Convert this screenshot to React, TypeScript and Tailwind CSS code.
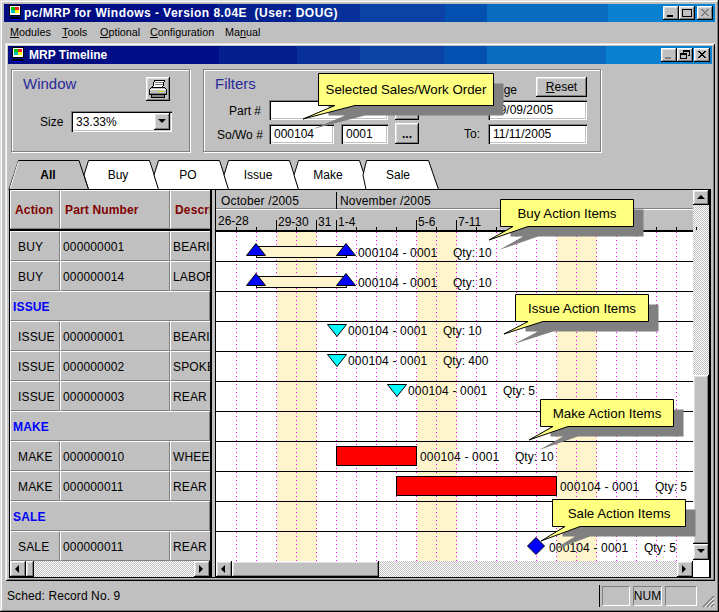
import type { ReactNode } from 'react';

const raised = 'bg-[#c0c0c0] shadow-[inset_-1px_-1px_0_#000,inset_1px_1px_0_#fff,inset_-2px_-2px_0_#808080,inset_2px_2px_0_#dfdfdf]';
const sunken = 'bg-white shadow-[inset_1px_1px_0_#808080,inset_2px_2px_0_#000,inset_-1px_-1px_0_#fff,inset_-2px_-2px_0_#c0c0c0]';
const groove = 'border border-[#808080] shadow-[1px_1px_0_#fff,inset_1px_1px_0_#fff]';
const dither = 'bg-[repeating-conic-gradient(#fff_0_25%,#c0c0c0_0_50%)] bg-[length:2px_2px]';
const titleBands =
  'bg-[linear-gradient(90deg,#000c80_0_13%,#000f88_13%_30%,#04208f_30%_41%,#08309a_41%_50%,#0a42a6_50%_62%,#0450b0_62%_68%,#0a6cc0_68%_85%,#0a80d0_85%_100%)]';

function AppIcon() {
  return (
    <svg width="12" height="16" viewBox="0 0 12 16" className="shrink-0" shapeRendering="crispEdges">
      <rect x="0" y="0" width="12" height="11" fill="#000" />
      <rect x="1" y="1" width="10" height="9" fill="#fff" />
      <rect x="2" y="2" width="4" height="3" fill="#00c000" />
      <rect x="6" y="2" width="4" height="3" fill="#ff2020" />
      <rect x="2" y="5" width="4" height="3" fill="#00c0c0" />
      <rect x="6" y="5" width="4" height="3" fill="#ffff00" />
      <rect x="1" y="12" width="10" height="2" fill="#000" />
      <rect x="2" y="14" width="8" height="1" fill="#0000ff" />
    </svg>
  );
}

function WinButton({ kind, disabled, className }: { kind: 'min' | 'max' | 'restore' | 'close'; disabled?: boolean; className?: string }) {
  const c = disabled ? '#808080' : '#000';
  return (
    <div className={`w-[16px] h-[14px] flex items-center justify-center ${raised} ${className ?? ''}`}>
      <svg width="12" height="10" viewBox="0 0 12 10" shapeRendering="crispEdges">
        {kind === 'min' && <rect x="2" y="7" width="6" height="2" fill={c} />}
        {kind === 'max' && <path d="M1.5 1.5H10.5V8.5H1.5Z M1 1.5H11" fill="none" stroke={c} />}
        {kind === 'restore' && (
          <>
            <path d="M4.5 2.5V0.5H10.5V5.5H8.5" fill="none" stroke={c} />
            <path d="M4 1H11" stroke={c} />
            <path d="M1.5 3.5H7.5V8.5H1.5Z" fill="none" stroke={c} />
            <path d="M1 4H8" stroke={c} />
          </>
        )}
        {kind === 'close' && <path d="M2 1L9 8M3 1L10 8M9 1L2 8M10 1L3 8" stroke={c} shapeRendering="auto" strokeWidth="1" />}
      </svg>
    </div>
  );
}

function PrinterIcon() {
  return (
    <svg width="20" height="18" viewBox="0 0 20 18" shapeRendering="crispEdges">
      <path d="M6.5 0.5H16.5L14.5 7.5H4.5Z" fill="#fff" stroke="#000" />
      <path d="M7 2.5H15M6.5 4.5H14.5" stroke="#808080" />
      <path d="M3.5 7.5H16.5L18.5 9.5V14.5H1.5V9.5Z" fill="#c0c0c0" stroke="#000" />
      <rect x="2" y="9" width="16" height="1" fill="#fff" />
      <rect x="10" y="11" width="5" height="1" fill="#e8e800" />
      <rect x="2" y="13" width="16" height="1" fill="#808080" />
      <rect x="3.5" y="14.5" width="13" height="3" fill="#808080" stroke="#000" />
    </svg>
  );
}

function Arrow({ dir }: { dir: 'up' | 'down' | 'left' | 'right' }) {
  const paths = {
    up: 'M4 1L8 5H0Z',
    down: 'M0 1H8L4 5Z',
    left: 'M5 0V8L1 4Z',
    right: 'M1 0V8L5 4Z',
  };
  return (
    <svg width="8" height="8" viewBox="0 0 8 8">
      <path d={paths[dir]} fill="#000" />
    </svg>
  );
}

function ScrollBtn({ dir, className }: { dir: 'up' | 'down' | 'left' | 'right'; className: string }) {
  return (
    <div className={`flex items-center justify-center shrink-0 ${raised} ${className}`}>
      <Arrow dir={dir} />
    </div>
  );
}

function Underlined({ pre, u, post }: { pre?: string; u: string; post?: string }) {
  return (
    <>
      {pre}
      <span className="underline">{u}</span>
      {post}
    </>
  );
}

function Panel({ className, children }: { className: string; children: ReactNode }) {
  return <div className={`h-[83px] shrink-0 relative ${groove} ${className}`}>{children}</div>;
}

function Field({ className, children }: { className: string; children?: ReactNode }) {
  return <div className={`h-[20px] flex items-center pl-[5px] text-[12px] text-black shrink-0 ${sunken} ${className}`}>{children}</div>;
}

const tabs = ['Buy', 'PO', 'Issue', 'Make', 'Sale'];

function Tabs() {
  return (
    <div className="flex h-[30px] mt-[8px] pl-[5px] text-[12px] text-black">
      {/* later tabs get drawn last so each notch sits over the previous tab */}
      <div className="relative w-[70px] flex items-center justify-center font-bold z-10">
        <svg width="70" height="30" className="absolute left-0 top-0 overflow-visible">
          <path d="M5.5 0.5H66L75.5 29.5H-4Z" fill="#c0c0c0" stroke="#000" />
          <path d="M5.5 1.5L-3 28.5" stroke="#fff" fill="none" />
        </svg>
        <span className="relative">All</span>
      </div>
      {tabs.map((t) => (
        <div key={t} className="relative w-[70px] flex items-center justify-center">
          <svg width="70" height="30" className="absolute left-0 top-0 overflow-visible">
            <path d={t === 'Sale' ? 'M3.5 0.5H65.5L75.5 29.5H3L0 15Z' : 'M5.5 0.5H66.5L76 29.5H5.5L1 15Z'} fill="#fff" stroke="#000" />
          </svg>
          <span className="relative">{t}</span>
        </div>
      ))}
    </div>
  );
}

type GridRow = { section: string } | { action: string; part: string; desc: string };

const gridRows: GridRow[] = [
  { action: 'BUY', part: '000000001', desc: 'BEARING' },
  { action: 'BUY', part: '000000014', desc: 'LABOR' },
  { section: 'ISSUE' },
  { action: 'ISSUE', part: '000000001', desc: 'BEARING' },
  { action: 'ISSUE', part: '000000002', desc: 'SPOKE' },
  { action: 'ISSUE', part: '000000003', desc: 'REAR AXLE' },
  { section: 'MAKE' },
  { action: 'MAKE', part: '000000010', desc: 'WHEEL' },
  { action: 'MAKE', part: '000000011', desc: 'REAR WHEEL' },
  { section: 'SALE' },
  { action: 'SALE', part: '000000011', desc: 'REAR WHEEL' },
];

const bevelCell = 'shrink-0 pt-[1px] border-t border-l border-t-white border-l-white border-b border-r border-b-[#808080] border-r-[#808080]';

function LeftGrid() {
  return (
    <div className="w-[203px] shrink-0 flex flex-col border-l border-r-2 border-black overflow-hidden text-[12px] text-black tracking-[0.15px]">
      <div className="h-[41px] flex shrink-0 border-b-2 border-black font-bold text-[#800000]">
        <div className={`w-[50px] flex items-center pl-[4px] ${bevelCell}`}>Action</div>
        <div className={`w-[110px] flex items-center pl-[4px] ${bevelCell}`}>Part Number</div>
        <div className={`w-[50px] flex items-center pl-[4px] whitespace-nowrap ${bevelCell}`}>Description</div>
      </div>
      {gridRows.map((r, i) =>
        'section' in r ? (
          <div key={i} className={`h-[30px] flex items-center pl-[2px] font-bold text-[#0000ff] ${bevelCell}`}>
            {r.section}
          </div>
        ) : (
          <div key={i} className="h-[30px] shrink-0 flex">
            <div className={`w-[50px] flex items-center pl-[7px] ${bevelCell}`}>{r.action}</div>
            <div className={`w-[110px] flex items-center pl-[2px] ${bevelCell}`}>{r.part}</div>
            <div className={`w-[50px] flex items-center pl-[2px] whitespace-nowrap ${bevelCell}`}>{r.desc}</div>
          </div>
        ),
      )}
      <div className="h-[16px] shrink-0 flex">
        <ScrollBtn dir="left" className="w-[16px] h-[16px]" />
        <div className={`w-[8px] h-[16px] shrink-0 ${raised}`} />
        <div className={`w-[160px] h-[16px] shrink-0 ${dither}`} />
        <ScrollBtn dir="right" className="w-[16px] h-[16px]" />
      </div>
    </div>
  );
}

const bandCols = [3, 4, 10, 11, 17, 18];
const cols = Array.from({ length: 24 }, (_, i) => i);

function Up({ x, y }: { x: number; y: number }) {
  return (
    <svg width="20" height="13" viewBox="0 0 20 13" className="absolute" style={{ left: x, top: y }}>
      <path d="M10 0.5L19.5 12.5H0.5Z" fill="#0000ff" stroke="#000" />
    </svg>
  );
}

function Down({ x }: { x: number }) {
  return (
    <svg width="20" height="13" viewBox="0 0 20 13" className="absolute top-[2px]" style={{ left: x }}>
      <path d="M0.5 0.5H19.5L10 12.5Z" fill="#00ffff" stroke="#000" />
    </svg>
  );
}

function RowText({ x, q, top, qty }: { x: number; q: number; top: number; qty: string }) {
  return (
    <>
      <span className="absolute whitespace-nowrap leading-[14px] tracking-[0.15px]" style={{ left: x, top }}>
        000104 - 0001
      </span>
      <span className="absolute whitespace-nowrap leading-[14px]" style={{ left: q, top }}>
        {qty}
      </span>
    </>
  );
}

function BuyBar() {
  return (
    <>
      <div className="absolute left-[40px] top-[14px] w-[91px] h-[12px] bg-[#fff5cc] border border-black" />
      <Up x={30} y={11} />
      <Up x={120} y={11} />
    </>
  );
}

const chartRows: ReactNode[] = [
  <>
    <BuyBar />
    <RowText x={142} q={237} top={14} qty="Qty: 10" />
  </>,
  <>
    <BuyBar />
    <RowText x={142} q={237} top={14} qty="Qty: 10" />
  </>,
  null,
  <>
    <Down x={111} />
    <RowText x={132} q={227} top={2} qty="Qty: 10" />
  </>,
  <>
    <Down x={111} />
    <RowText x={132} q={227} top={2} qty="Qty: 400" />
  </>,
  <>
    <Down x={171} />
    <RowText x={192} q={287} top={2} qty="Qty: 5" />
  </>,
  null,
  <>
    <div className="absolute left-[120px] top-[4px] w-[81px] h-[20px] bg-[#ff0000] border border-black" />
    <RowText x={204} q={299} top={8} qty="Qty: 10" />
  </>,
  <>
    <div className="absolute left-[180px] top-[4px] w-[161px] h-[20px] bg-[#ff0000] border border-black" />
    <RowText x={344} q={439} top={8} qty="Qty: 5" />
  </>,
  null,
  <>
    <svg width="18" height="18" viewBox="0 0 18 18" className="absolute left-[311px] top-[5px]">
      <path d="M9 0.5L17.5 9L9 17.5L0.5 9Z" fill="#0000ff" stroke="#000" />
    </svg>
    <RowText x={333} q={428} top={9} qty="Qty: 5" />
  </>,
];

function DayLabel({ w, children }: { w: string; children: ReactNode }) {
  return (
    <div className={`${w} h-[10px] pl-[1px] border-l border-black flex items-center shrink-0`}>
      <span className="-translate-y-[3px]">{children}</span>
    </div>
  );
}

function Chart() {
  return (
    <div className="w-[477px] shrink-0 flex flex-col text-[12px] text-black">
      <div className="h-[42px] shrink-0 border-b-2 border-black flex flex-col">
        <div className="h-[20px] pt-[2px] flex border-b border-b-white shadow-[inset_0_-1px_0_#808080] tracking-[0.15px]">
          <div className="w-[121px] pl-[5px] flex items-center border-r border-black">October /2005</div>
          <div className="pl-[3px] flex items-center">November /2005</div>
        </div>
        <div className="relative flex-1 flex items-end">
          <div className="absolute left-0 right-0 bottom-0 h-[3px] flex pl-[1px]">
            {cols.map((c) => (
              <div key={c} className="w-[20px] shrink-0 border-r border-black" />
            ))}
          </div>
          <div className="w-[60px] h-[20px] pl-[2px] pt-[1px] flex items-center shrink-0">26-28</div>
          <DayLabel w="w-[40px]">29-30</DayLabel>
          <DayLabel w="w-[20px]">31</DayLabel>
          <DayLabel w="w-[80px]">1-4</DayLabel>
          <DayLabel w="w-[40px]">5-6</DayLabel>
          <DayLabel w="w-[60px]">7-11</DayLabel>
        </div>
      </div>
      <div className="relative flex-1 bg-white overflow-hidden flex flex-col">
        <div className="absolute inset-0 flex pl-[1px]">
          {cols.map((c) => (
            <div key={c} className={`w-[20px] shrink-0 flex justify-end ${bandCols.includes(c) ? 'bg-[#fff5cc]' : ''}`}>
              {c < 23 && <div className="w-[1px] h-full bg-[repeating-linear-gradient(#ff00ff_0_1px,transparent_1px_4px)]" />}
            </div>
          ))}
        </div>
        {chartRows.map((content, i) => (
          <div key={i} className={`relative shrink-0 ${i < 10 ? 'h-[30px] border-b border-black' : 'h-[29px]'}`}>
            {content}
          </div>
        ))}
      </div>
      <div className="h-[16px] shrink-0 flex">
        <ScrollBtn dir="left" className="w-[16px] h-[16px]" />
        <div className={`w-[147px] h-[16px] shrink-0 ${raised}`} />
        <div className={`flex-1 h-[16px] ${dither}`} />
        <ScrollBtn dir="right" className="w-[16px] h-[16px]" />
      </div>
    </div>
  );
}

function VScroll() {
  return (
    <div className="w-[16px] shrink-0 flex flex-col">
      <ScrollBtn dir="up" className="w-[16px] h-[15px]" />
      <div className={`h-[170px] shrink-0 ${dither}`} />
      <div className={`h-[169px] shrink-0 ${raised}`} />
      <ScrollBtn dir="down" className="w-[16px] h-[16px]" />
      <div className="flex-1 bg-white" />
    </div>
  );
}

function Callout({ x, y, w, h, a, b, tip, children }: { x: number; y: number; w: number; h: number; a: number; b: number; tip: [number, number]; children: ReactNode }) {
  const outline = `M0.5 0.5H${w - 0.5}V${h - 0.5}H${b}L${tip[0]} ${tip[1]}L${a} ${h - 0.5}H0.5Z`;
  return (
    <div
      className="absolute flex items-center justify-center text-[13.3px] text-black whitespace-nowrap z-20"
      style={{ left: x, top: y, width: w, height: h }}
    >
      <svg width={w} height={h} className="absolute left-0 top-0 overflow-visible">
        <path d={outline} fill="#808080" transform="translate(10 10)" />
        <path d={outline} fill="#ffff80" stroke="#000" />
      </svg>
      <span className="relative pt-[1px]">{children}</span>
    </div>
  );
}

export default function App() {
  return (
    <div className="relative w-[719px] h-[612px] overflow-hidden bg-[#c0c0c0] p-[4px] flex flex-col font-['Liberation_Sans',Arial,sans-serif] shadow-[inset_-1px_-1px_0_#000,inset_1px_1px_0_#dfdfdf,inset_-2px_-2px_0_#808080,inset_2px_2px_0_#fff]">
      {/* main title bar */}
      <div className={`h-[18px] shrink-0 flex items-center pl-[5px] pr-[2px] text-white font-bold text-[12px] ${titleBands}`}>
        <AppIcon />
        <span className="ml-[3px] whitespace-pre tracking-[0.45px]">pc/MRP for Windows - Version 8.04E  (User: DOUG)</span>
        <div className="ml-auto flex">
          <WinButton kind="min" />
          <WinButton kind="max" />
          <WinButton kind="close" disabled className="ml-[2px]" />
        </div>
      </div>

      {/* menu */}
      <div className="h-[21px] shrink-0 flex items-center pl-[6px] text-[10.8px] text-black">
        <span className="w-[52px]"><Underlined u="M" post="odules" /></span>
        <span className="w-[38px]"><Underlined u="T" post="ools" /></span>
        <span className="w-[50px]"><Underlined u="O" post="ptional" /></span>
        <span className="w-[75px]"><Underlined u="C" post="onfiguration" /></span>
        <span><Underlined pre="Ma" u="n" post="ual" /></span>
      </div>

      {/* child window */}
      <div className="h-[538px] shrink-0 p-[3px] ml-[1px] flex flex-col shadow-[inset_1px_1px_0_#dfdfdf,inset_-1px_-1px_0_#000,inset_2px_2px_0_#fff,inset_-2px_-2px_0_#808080]">
        <div className={`h-[18px] shrink-0 flex items-center pl-[4px] pr-[2px] text-white font-bold text-[12px] ${titleBands}`}>
          <AppIcon />
          <span className="ml-[5px]">MRP Timeline</span>
          <div className="ml-auto flex">
            <WinButton kind="min" disabled />
            <WinButton kind="restore" />
            <WinButton kind="close" className="ml-[1px]" />
          </div>
        </div>

        <div className="flex mt-[5px] ml-[3px]">
          <Panel className="w-[179px]">
            <div className="flex items-start justify-between pl-[11px] pr-[19px] pt-[6px]">
              <span className="text-[15px] leading-[16px] text-[#2a2a9a]">Window</span>
              <div className={`w-[24px] h-[24px] flex items-center justify-center mt-[1px] ${raised}`}>
                <PrinterIcon />
              </div>
            </div>
            <div className="flex items-center mt-[10px] ml-[28px]">
              <span className="text-[12px] text-black w-[31px]">Size</span>
              <div className={`w-[101px] h-[21px] flex items-center justify-between pl-[5px] pr-[2px] text-[12px] text-black ${sunken}`}>
                33.33%
                <ScrollBtn dir="down" className="w-[16px] h-[17px]" />
              </div>
            </div>
          </Panel>

          <Panel className="w-[398px] ml-[13px]">
            <div className="flex h-full">
              <div className="w-[260px] shrink-0 flex flex-col pl-[11px] pt-[5px]">
                <span className="text-[15px] text-[#2a2a9a] leading-[18px]">Filters</span>
                <div className="flex items-center mt-[7px]">
                  <span className="w-[46px] pt-[2px] text-[12px] text-black text-right mr-[8px] whitespace-nowrap">Part #</span>
                  <Field className="w-[119px]" />
                  <div className={`w-[24px] h-[20px] ml-[7px] ${raised}`} />
                </div>
                <div className="flex items-center mt-[3px]">
                  <span className="w-[52px] ml-[2px] pt-[2px] text-[12px] text-black whitespace-nowrap">So/Wo #</span>
                  <Field className="w-[65px]">000104</Field>
                  <Field className="w-[47px] ml-[7px]">0001</Field>
                  <div className={`w-[24px] h-[21px] ml-[7px] flex items-end justify-center pb-[4px] text-[12px] leading-none font-bold text-black ${raised}`}>...</div>
                </div>
              </div>
              <div className="flex-1 min-w-0 flex flex-col items-end pr-[13px] pt-[7px]">
                <div className="flex items-start justify-end w-max">
                  <span className="text-[12px] leading-[14px] text-black mr-[19px] mt-[6px] whitespace-nowrap">Date Range</span>
                  <div className={`w-[51px] h-[20px] flex items-center justify-center text-[12px] text-black ${raised}`}>
                    <Underlined u="R" post="eset" />
                  </div>
                </div>
                <div className="flex items-center mt-[3px] w-max">
                  <span className="text-[12px] text-black mr-[8px]">From:</span>
                  <Field className="w-[99px]">09/09/2005</Field>
                </div>
                <div className="flex items-center mt-[4px] w-max">
                  <span className="text-[12px] text-black mr-[8px]">To:</span>
                  <Field className="w-[99px]">11/11/2005</Field>
                </div>
              </div>
            </div>
          </Panel>
        </div>

        <Tabs />

        <div className="h-[389px] w-[702px] ml-[1px] shrink-0 flex border-t border-b border-r-2 border-black">
          <LeftGrid />
          <div className="w-[4px] shrink-0 border-r border-black" />
          <Chart />
          <VScroll />
        </div>
      </div>

      {/* status bar */}
      <div className="h-[25px] shrink-0 mt-[2px] flex items-center pl-[3px] text-[12px] text-black">
        <span className="tracking-[0.1px]">Sched: Record No. 9</span>
        <div className="ml-auto flex items-center h-full">
          <div className="w-[1px] h-[22px] bg-black mr-[2px]" />
          <div className="w-[28px] h-[20px] border border-[#808080] border-r-white border-b-white" />
          <div className="w-[29px] h-[20px] ml-[3px] border border-[#808080] border-r-white border-b-white flex items-center justify-center">NUM</div>
          <div className="w-[32px] h-[20px] ml-[3px] border border-[#808080] border-r-white border-b-white" />
          <svg width="15" height="15" viewBox="0 0 15 15" className="ml-[3px] self-end">
            <path d="M14 3L3 14M14 7L7 14M14 11L11 14" stroke="#808080" strokeWidth="1.5" fill="none" />
            <path d="M14 5L5 14M14 9L9 14M14 13L13 14" stroke="#fff" fill="none" />
          </svg>
        </div>
      </div>

      <Callout x={318} y={73} w={176} h={33} a={17} b={37} tip={[-15, 46]}>Selected Sales/Work Order</Callout>
      <Callout x={500} y={199} w={134} h={28} a={13} b={28} tip={[-11, 41]}>Buy Action Items</Callout>
      <Callout x={515} y={294} w={134} h={28} a={13} b={28} tip={[-11, 40]}>Issue Action Items</Callout>
      <Callout x={540} y={399} w={134} h={28} a={13} b={28} tip={[-11, 41]}>Make Action Items</Callout>
      <Callout x={552} y={499} w={134} h={28} a={13} b={28} tip={[-11, 42]}>Sale Action Items</Callout>
    </div>
  );
}
